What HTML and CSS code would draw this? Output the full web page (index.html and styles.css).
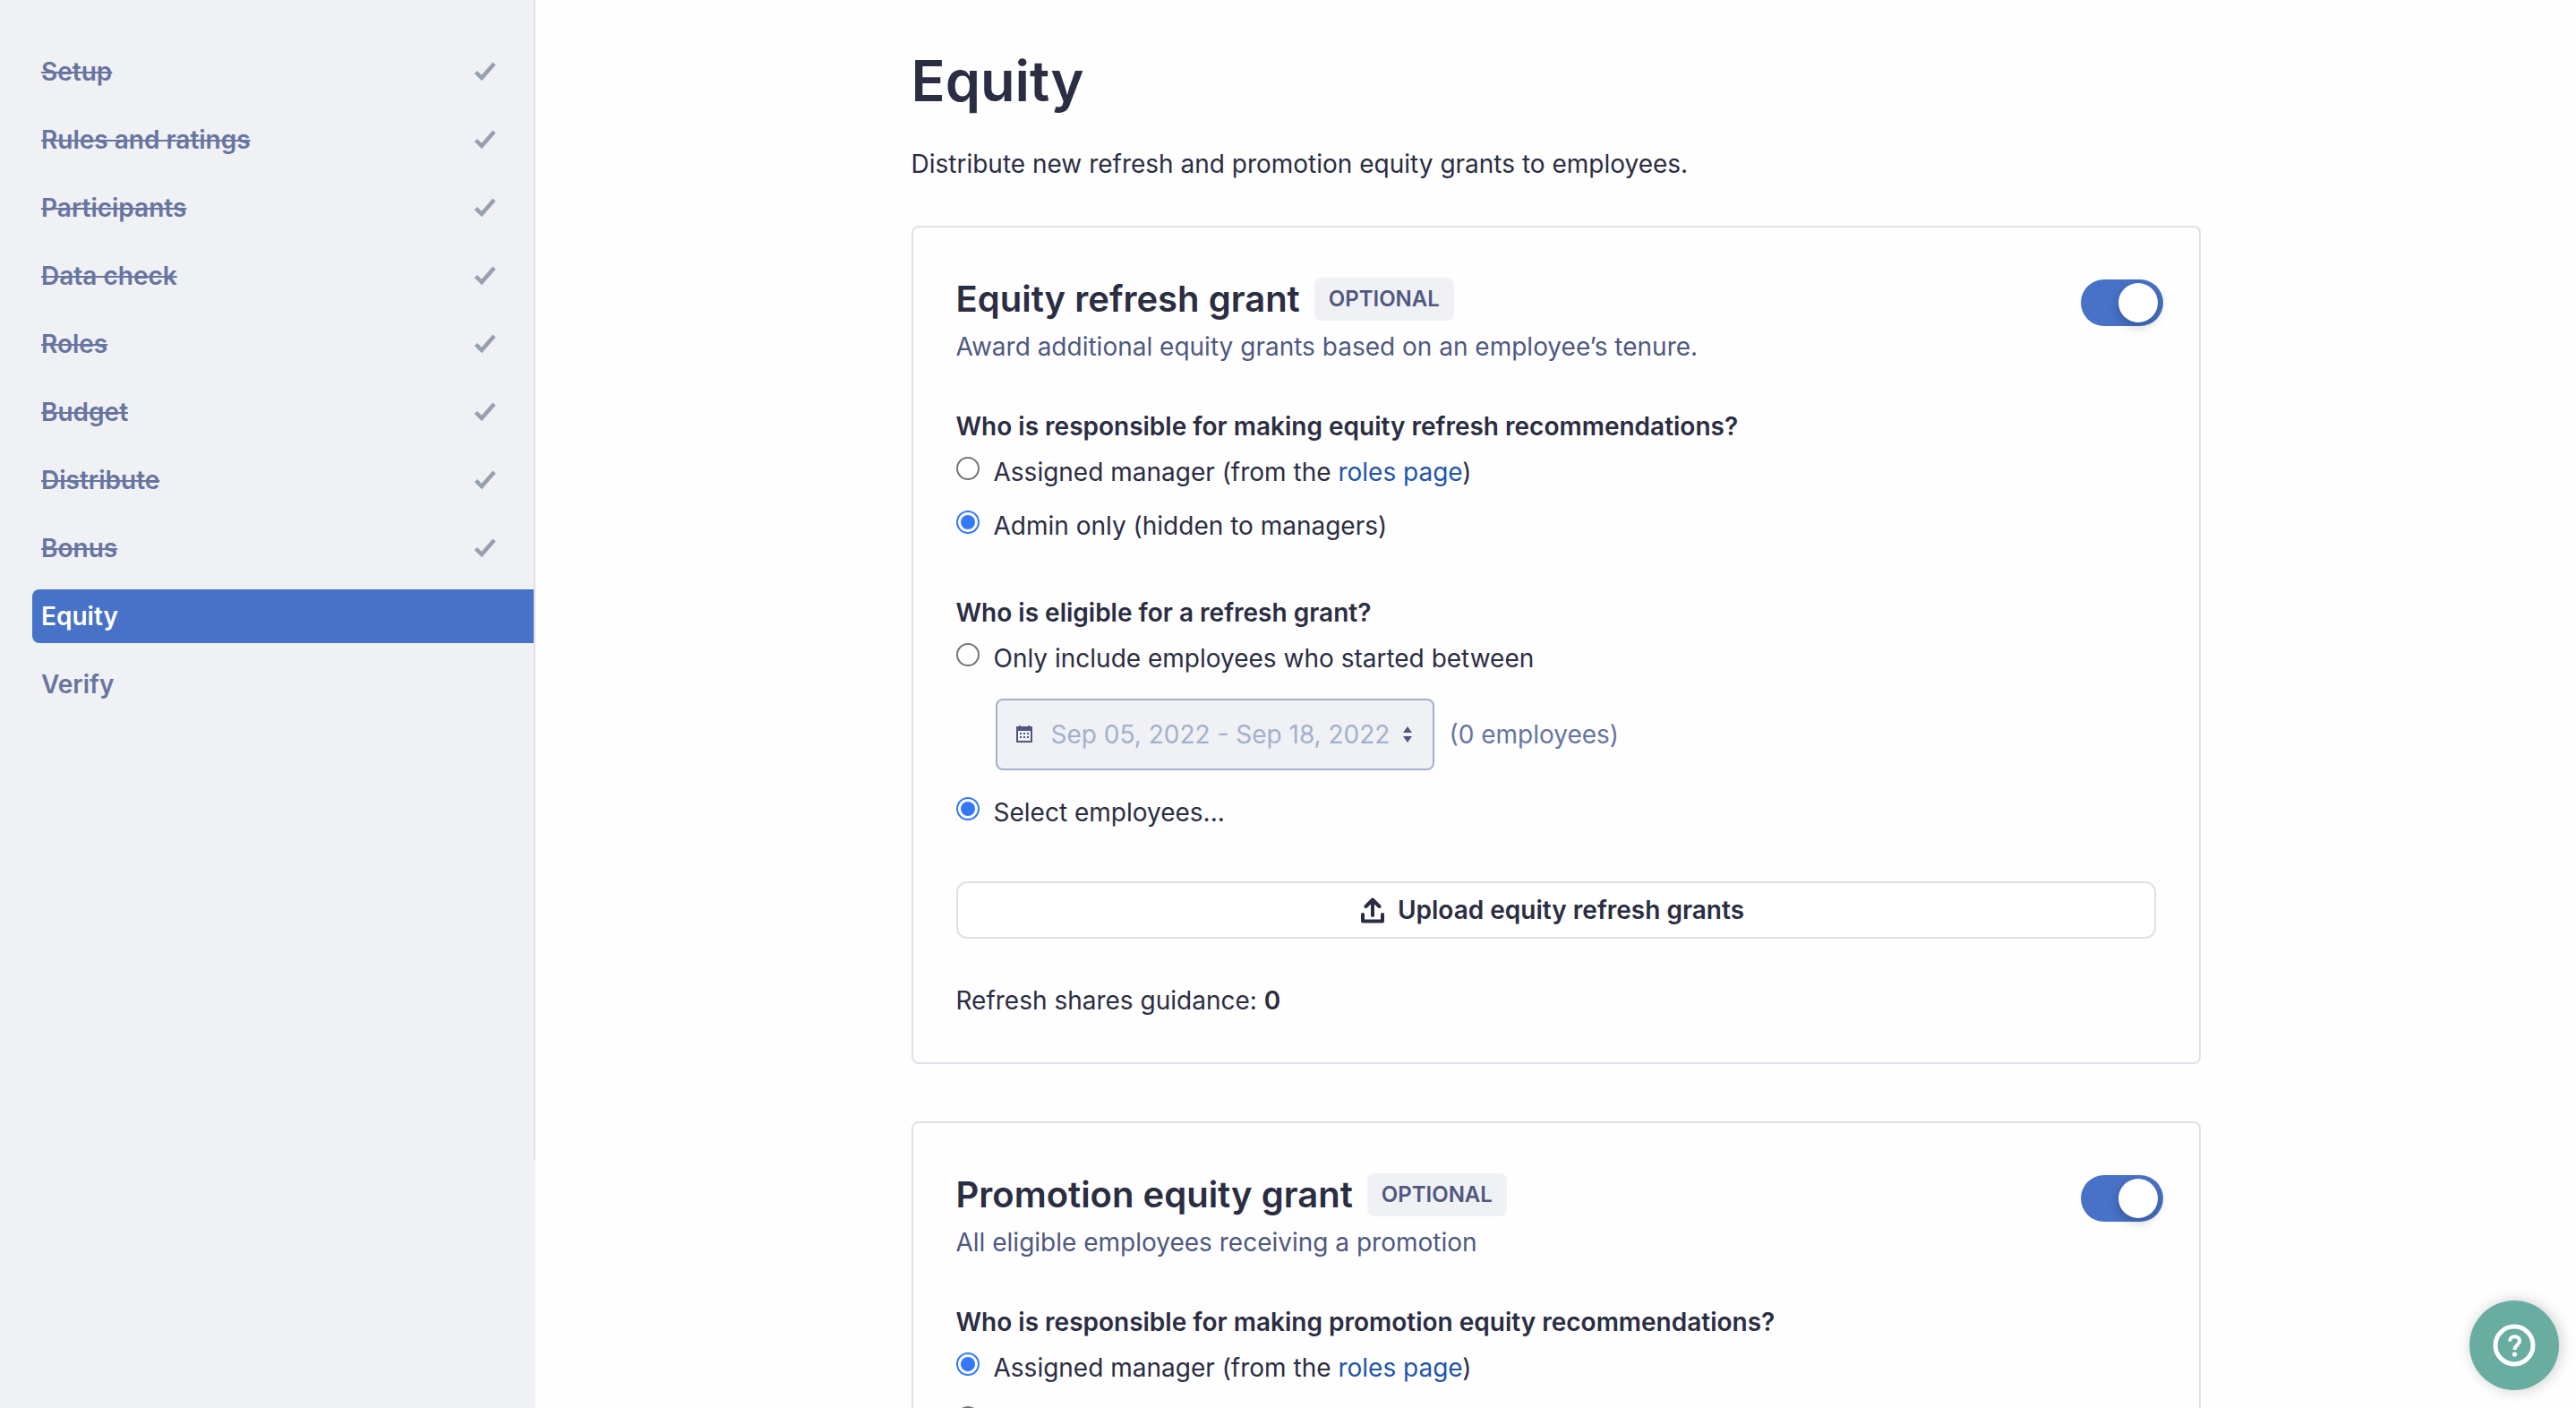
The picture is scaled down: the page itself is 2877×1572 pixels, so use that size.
FILE: index.html
```html
<!DOCTYPE html>
<html lang="en">
<head>
    <meta charset="UTF-8">
    <meta name="viewport" content="width=device-width, initial-scale=1.0">
    <title>Equity</title>
    <link rel="stylesheet" href="styles.css">
</head>
<body>
    <svg width="0" height="0" class="defs" aria-hidden="true">
        <symbol id="check" viewBox="0 0 24 22">
            <path d="M1.500 11.500 8 18 22 2" fill="none" stroke="currentColor" stroke-width="4.500"/>
        </symbol>
    </svg>
    <div class="layout">
        <aside class="sidebar">
            <nav class="steps">
                <a href="#" class="step done"><span>Setup</span><svg class="check"><use href="#check"/></svg></a>
                <a href="#" class="step done"><span>Rules and ratings</span><svg class="check"><use href="#check"/></svg></a>
                <a href="#" class="step done"><span>Participants</span><svg class="check"><use href="#check"/></svg></a>
                <a href="#" class="step done"><span>Data check</span><svg class="check"><use href="#check"/></svg></a>
                <a href="#" class="step done"><span>Roles</span><svg class="check"><use href="#check"/></svg></a>
                <a href="#" class="step done"><span>Budget</span><svg class="check"><use href="#check"/></svg></a>
                <a href="#" class="step done"><span>Distribute</span><svg class="check"><use href="#check"/></svg></a>
                <a href="#" class="step done"><span>Bonus</span><svg class="check"><use href="#check"/></svg></a>
                <a href="#" class="step active" aria-current="step"><span>Equity</span></a>
                <a href="#" class="step"><span>Verify</span></a>
            </nav>
        </aside>

        <main class="main">
            <div class="content">
                <h1>Equity</h1>
                <p class="intro">Distribute new refresh and promotion equity grants to employees.</p>

                <section class="card">
                    <div class="card-header">
                        <h2>Equity refresh grant</h2>
                        <span class="badge">OPTIONAL</span>
                        <input type="checkbox" class="toggle" aria-label="Equity refresh grant" checked>
                    </div>
                    <p class="description">Award additional equity grants based on an employee’s tenure.</p>

                    <fieldset>
                        <legend>Who is responsible for making equity refresh recommendations?</legend>
                        <div class="option">
                            <input type="radio" name="refresh-owner" id="refresh-manager">
                            <label for="refresh-manager">Assigned manager (from the <a href="#">roles page</a>)</label>
                        </div>
                        <div class="option">
                            <input type="radio" name="refresh-owner" id="refresh-admin" checked>
                            <label for="refresh-admin">Admin only (hidden to managers)</label>
                        </div>
                    </fieldset>

                    <fieldset>
                        <legend>Who is eligible for a refresh grant?</legend>
                        <div class="option">
                            <input type="radio" name="eligible" id="eligible-dates">
                            <label for="eligible-dates">Only include employees who started between</label>
                        </div>
                        <div class="date-row">
                            <button type="button" class="date-range" disabled>
                                <svg class="calendar" viewBox="0 0 20 20">
                                    <path fill-rule="evenodd" fill="currentColor" d="M1 1h3V0h2v1h8V0h2v1h3v18H1zM3 6v11h14V6z"/>
                                    <path fill="currentColor" d="M5 8h2v2H5zM9 8h2v2H9zM13 8h2v2h-2zM5 12h2v2H5zM9 12h2v2H9zM13 12h2v2h-2z"/>
                                </svg>
                                <span>Sep 05, 2022 - Sep 18, 2022</span>
                                <svg class="sort" viewBox="0 0 12 18">
                                    <path fill="currentColor" d="M6 0l5 7H1zM6 18l5-7H1z"/>
                                </svg>
                            </button>
                            <span class="count">(0 employees)</span>
                        </div>
                        <div class="option">
                            <input type="radio" name="eligible" id="eligible-select" checked>
                            <label for="eligible-select">Select employees...</label>
                        </div>
                    </fieldset>

                    <button type="button" class="upload">
                        <svg class="upload-icon" viewBox="0 0 28 30">
                            <path fill="none" stroke="currentColor" stroke-width="4" stroke-linecap="round" stroke-linejoin="round" d="M14 21V4M6.500 11 14 3.500l7.500 7.500M3 20v7.500h22V20"/>
                        </svg>
                        Upload equity refresh grants
                    </button>

                    <p class="guidance">Refresh shares guidance: <strong>0</strong></p>
                </section>

                <section class="card">
                    <div class="card-header">
                        <h2>Promotion equity grant</h2>
                        <span class="badge">OPTIONAL</span>
                        <input type="checkbox" class="toggle" aria-label="Promotion equity grant" checked>
                    </div>
                    <p class="description">All eligible employees receiving a promotion</p>

                    <fieldset>
                        <legend>Who is responsible for making promotion equity recommendations?</legend>
                        <div class="option">
                            <input type="radio" name="promotion-owner" id="promotion-manager" checked>
                            <label for="promotion-manager">Assigned manager (from the <a href="#">roles page</a>)</label>
                        </div>
                        <div class="option">
                            <input type="radio" name="promotion-owner" id="promotion-admin">
                            <label for="promotion-admin">Admin only (hidden to managers)</label>
                        </div>
                    </fieldset>
                </section>
            </div>
        </main>
    </div>

    <button type="button" class="help" aria-label="Help">
        <svg viewBox="0 0 48 48">
            <circle cx="24" cy="24" r="21" fill="none" stroke="currentColor" stroke-width="5"/>
            <path d="M19 19.500c0-7 11-7 11-.5 0 5-5.500 4.500-5.500 10" fill="none" stroke="currentColor" stroke-width="4"/>
            <circle cx="24.500" cy="34" r="2.600" fill="currentColor"/>
        </svg>
    </button>
</body>
</html>
```
FILE: styles.css
```css
* {
    box-sizing: border-box;
}
body {
    margin: 0;
    font-family: Inter, "Liberation Sans", sans-serif;
    font-size: 28px;
    line-height: 42px;
    color: #2b2d42;
    background: #fefefe;
}
h1, h2, p {
    margin: 0;
}
a {
    color: #1f56a8;
    text-decoration: none;
}
button {
    font: inherit;
}
.defs {
    position: absolute;
}
.layout {
    display: flex;
    height: 100vh;
}

/* sidebar */
.sidebar {
    flex: 0 0 598px;
    background: #f0f1f5;
}
.steps {
    display: flex;
    flex-direction: column;
    gap: 16px;
    min-height: 1296px;
    padding: 50px 0 0 36px;
    border-right: 2px solid #dedfe9;
}
.step {
    display: flex;
    align-items: center;
    justify-content: space-between;
    height: 60px;
    padding: 0 42px 0 10px;
    border-radius: 8px 0 0 8px;
    font-weight: 600;
    color: #6775a0;
}
.step.done span {
    text-decoration: line-through;
}
.step.active {
    color: #fff;
    background: #4772c8;
}
.check {
    width: 24px;
    height: 22px;
    color: #96a0af;
}

/* content */
.main {
    flex: 1;
    overflow-y: auto;
    scrollbar-width: none;
    padding: 50px 48px 64px;
}
.content {
    max-width: 1440px;
    margin: 0 auto;
}
h1 {
    margin-bottom: 32px;
    font-size: 63px;
    line-height: 80px;
    font-weight: 600;
}
.intro {
    margin-bottom: 48px;
}
.card {
    margin-bottom: 64px;
    padding: 56px 48px 48px;
    border: 2px solid #dee1e8;
    border-radius: 8px;
}
.card-header {
    display: flex;
    align-items: center;
    gap: 16px;
    margin-bottom: 8px;
}
h2 {
    font-size: 40px;
    line-height: 48px;
    font-weight: 600;
}
.badge {
    padding: 0 16px;
    border-radius: 8px;
    font-size: 24px;
    line-height: 48px;
    font-weight: 600;
    color: #50587f;
    background: #f0f1f5;
}
.description {
    margin-bottom: 48px;
    color: #50587f;
}
.toggle {
    appearance: none;
    display: flex;
    justify-content: flex-end;
    width: 92px;
    height: 52px;
    margin: 0 -8px -8px auto;
    padding: 4px 6px;
    border-radius: 26px;
    background: #4772c8;
}
.toggle::before {
    content: "";
    width: 44px;
    height: 44px;
    border-radius: 50%;
    background: #fff;
    box-shadow: 0 4px 12px rgba(0, 0, 0, .25);
}

/* radio questions */
fieldset {
    min-width: 0;
    margin: 0 0 56px;
    padding: 0;
    border: 0;
}
legend {
    margin-bottom: 10px;
    padding: 0;
    line-height: 40px;
    font-weight: 600;
}
.option {
    display: flex;
    align-items: flex-start;
    gap: 16px;
}
.option + .option {
    margin-top: 18px;
}
.option input {
    appearance: none;
    width: 26px;
    height: 26px;
    margin: 4px 0 0;
    border: 2px solid #767676;
    border-radius: 50%;
    background: #fff;
}
.option input:checked {
    padding: 3px;
    border-color: #3478f6;
    background: #3478f6 content-box;
}
.date-row {
    display: flex;
    align-items: center;
    gap: 16px;
    margin: 24px 0 26px 44px;
}
.date-range {
    display: flex;
    align-items: center;
    height: 80px;
    padding: 0 22px 0 20px;
    border: 2px solid #a3b0cb;
    border-radius: 8px;
    color: #a3b0cb;
    background: #f0f1f5;
}
.calendar {
    width: 20px;
    height: 20px;
    margin-right: 20px;
    color: #50587f;
}
.sort {
    width: 12px;
    height: 18px;
    margin-left: 14px;
    color: #50587f;
}
.count {
    color: #6775a0;
}
.upload {
    display: flex;
    align-items: center;
    justify-content: center;
    gap: 14px;
    width: 100%;
    height: 64px;
    margin-bottom: 48px;
    padding: 0 8px 0 0;
    border: 2px solid #dee1e8;
    border-radius: 12px;
    font-weight: 600;
    color: #2b2d42;
    background: #fff;
}
.upload-icon {
    width: 28px;
    height: 30px;
}
.guidance strong {
    font-weight: 600;
}

/* floating help button */
.help {
    position: fixed;
    right: 19px;
    bottom: 20px;
    display: flex;
    align-items: center;
    justify-content: center;
    width: 100px;
    height: 100px;
    padding: 0;
    border: 0;
    border-radius: 50%;
    color: #fff;
    background: #69ada1;
    box-shadow: 2px 0 16px rgba(0, 0, 0, .2);
}
.help svg {
    width: 48px;
    height: 48px;
}
```
